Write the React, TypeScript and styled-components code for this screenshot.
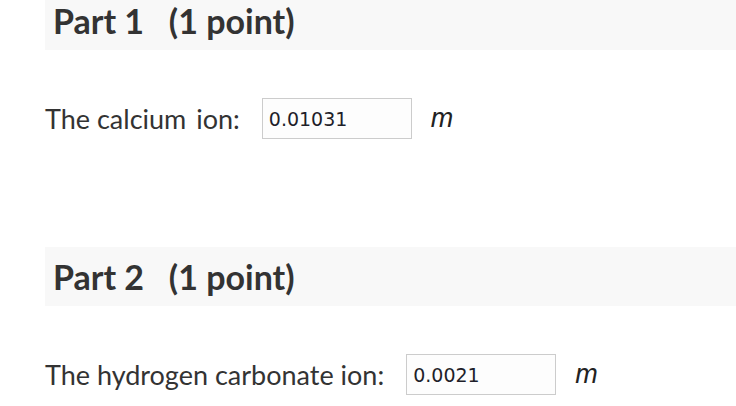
import styled, { createGlobalStyle } from 'styled-components';

const GlobalStyle = createGlobalStyle`
  html, body {
    margin: 0;
    padding: 0;
    background: #ffffff;
    overflow: hidden;
  }
  body {
    font-family: Lato, "Liberation Sans", sans-serif;
    color: #333333;
  }
`;

const Page = styled.div`
  width: 736px;
  height: 406px;
  padding-left: 45px;
  box-sizing: border-box;
  margin-top: -9px;
`;

const PartHeader = styled.h2`
  margin: 0;
  height: 59px;
  display: flex;
  align-items: center;
  padding-left: 8px;
  background: #f8f8f8;
  font-family: Lato, sans-serif;
  font-weight: 700;
  font-size: 34px;
  color: #333333;
  white-space: pre;
`;

const QuestionRow = styled.div`
  display: flex;
  align-items: center;
  height: 41px;
  margin-top: 48px;
  margin-bottom: 108px;
`;

const Label = styled.span`
  font-size: 27px;
  color: #333333;
  white-space: pre;
`;

const Gap = styled.span`
  display: inline-block;
  width: 3px;
`;

const AnswerInput = styled.input`
  width: 150px;
  height: 41px;
  box-sizing: border-box;
  margin-left: 22px;
  padding: 1px 6px 0;
  border: 1px solid #cccccc;
  background: #fdfdfd;
  font-family: "DejaVu Sans", Verdana, sans-serif;
  font-size: 19px;
  color: #1f1f2a;
  outline: none;
`;

const Unit = styled.span`
  margin-left: 19px;
  font-family: "Liberation Sans", Arial, sans-serif;
  font-size: 27px;
  font-style: italic;
  color: #222222;
`;

const parts = [
  { n: 1, label: ['The calcium', 'ion:'], value: '0.01031' },
  { n: 2, label: ['The hydrogen carbonate ion:'], value: '0.0021' },
];

const App = () => {
  return (
    <Page>
      <GlobalStyle />
      {parts.map((p) => (
        <section key={p.n}>
          <PartHeader>{`Part ${p.n}   (1 point)`}</PartHeader>
          <QuestionRow>
            <Label>
              {p.label.length > 1 ? (
                <>
                  {p.label[0]} <Gap />{p.label[1]}
                </>
              ) : (
                p.label[0]
              )}
            </Label>
            <AnswerInput defaultValue={p.value} readOnly />
            <Unit>m</Unit>
          </QuestionRow>
        </section>
      ))}
    </Page>
  );
};

export default App;
